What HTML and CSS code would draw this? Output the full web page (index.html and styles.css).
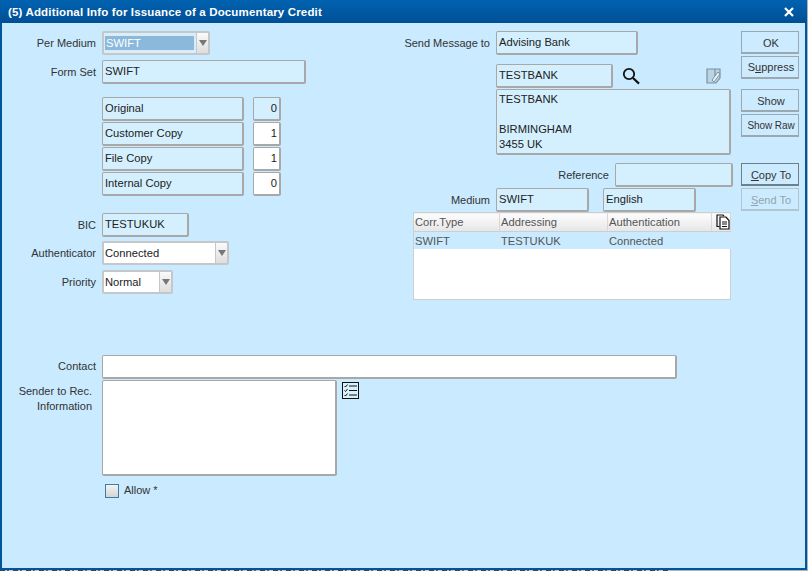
FILE: index.html
```html
<!DOCTYPE html>
<html lang="en">
<head>
    <meta charset="UTF-8">
    <title>Additional Info for Issuance of a Documentary Credit</title>
    <link rel="stylesheet" href="styles.css">
</head>
<body>
    <div class="dialog">
        <header class="titlebar">
            <h1>(5) Additional Info for Issuance of a Documentary Credit</h1>
            <svg class="close" viewBox="0 0 10 10" width="10" height="10"><path d="M1 1L9 9M9 1L1 9" stroke="#fff" stroke-width="2.2" fill="none"/></svg>
        </header>

        <div class="content">
            <div class="top">
                <section class="left-col">
                    <div class="row">
                        <label>Per Medium</label>
                        <div class="select select-medium">
                            <span class="select-value selected">SWIFT</span>
                            <span class="arrow"></span>
                        </div>
                    </div>
                    <div class="row row-formset">
                        <label>Form Set</label>
                        <div class="field w-204">SWIFT</div>
                    </div>

                    <div class="copies">
                        <div class="field">Original</div>
                        <div class="field num">0</div>
                        <div class="field">Customer Copy</div>
                        <div class="field num white">1</div>
                        <div class="field">File Copy</div>
                        <div class="field num white">1</div>
                        <div class="field">Internal Copy</div>
                        <div class="field num white">0</div>
                    </div>

                    <div class="row row-bic">
                        <label>BIC</label>
                        <div class="field w-87">TESTUKUK</div>
                    </div>
                    <div class="row row-auth">
                        <label>Authenticator</label>
                        <div class="select select-auth">
                            <span class="select-value">Connected</span>
                            <span class="arrow"></span>
                        </div>
                    </div>
                    <div class="row row-priority">
                        <label>Priority</label>
                        <div class="select select-priority">
                            <span class="select-value">Normal</span>
                            <span class="arrow"></span>
                        </div>
                    </div>
                </section>

                <section class="mid-col">
                    <div class="row">
                        <label class="mid-label">Send Message to</label>
                        <div class="field w-142">Advising Bank</div>
                    </div>
                    <div class="row row-bank">
                        <div class="field w-117">TESTBANK</div>
                        <svg class="icon-search" viewBox="0 0 18 18" width="18" height="18">
                            <circle cx="7" cy="7" r="5.2" fill="none" stroke="#111" stroke-width="1.8"/>
                            <path d="M11 11L17 16.6" stroke="#111" stroke-width="2.2" fill="none"/>
                        </svg>
                        <svg class="icon-note" viewBox="0 0 15 16" width="15" height="16">
                            <path d="M1 1H14V10L10 15H1Z" fill="#b9d4e4" stroke="#7f909c" stroke-width="1.2"/>
                            <path d="M9 1V8" stroke="#7f909c" stroke-width="1.2"/>
                            <path d="M6 12L12 4L14 6L8 14Z" fill="#e6f3fa" stroke="#7f909c"/>
                        </svg>
                    </div>
                    <div class="field address">TESTBANK<br><br>BIRMINGHAM<br>3455 UK</div>
                    <div class="row row-reference">
                        <label>Reference</label>
                        <div class="field w-118"></div>
                    </div>
                    <div class="row row-medium">
                        <label class="mid-label">Medium</label>
                        <div class="field w-93">SWIFT</div>
                        <div class="field w-93 english">English</div>
                    </div>
                    <table class="grid">
                        <thead>
                            <tr>
                                <th class="c1">Corr.Type</th>
                                <th class="c2">Addressing</th>
                                <th class="c3">Authentication</th>
                                <th class="c4">
                                    <svg viewBox="0 0 14 16" width="14" height="16">
                                        <path d="M3.500 12.500H1V1H7L8 2" fill="none" stroke="#111" stroke-width="1.200"/>
                                        <path d="M4 3H10L13 6.500V15H4Z" fill="#fff" stroke="#111" stroke-width="1.200"/>
                                        <path d="M6 8H11M6 10H11M6 12.500H11" stroke="#111"/>
                                    </svg>
                                </th>
                            </tr>
                        </thead>
                        <tbody>
                            <tr class="sel">
                                <td>SWIFT</td>
                                <td>TESTUKUK</td>
                                <td>Connected</td>
                                <td></td>
                            </tr>
                            <tr class="filler">
                                <td colspan="4"></td>
                            </tr>
                        </tbody>
                    </table>
                </section>

                <section class="buttons">
                    <button class="btn">OK</button>
                    <button class="btn btn-second">S<u>u</u>ppress</button>
                    <button class="btn btn-show">Show</button>
                    <button class="btn btn-second btn-small">Show Raw</button>
                    <button class="btn btn-copy"><u>C</u>opy To</button>
                    <button class="btn btn-disabled"><u>S</u>end To</button>
                </section>
            </div>

            <section class="lower">
                <div class="row row-contact">
                    <label>Contact</label>
                    <div class="field white w-575"></div>
                </div>
                <div class="row row-sender">
                    <label class="label-wrap">Sender to Rec. Information</label>
                    <div class="field white sender"></div>
                    <svg class="icon-list" viewBox="0 0 17 17" width="17" height="17">
                        <rect x="0.500" y="0.500" width="16" height="16" fill="#d9f0fd" stroke="#111"/>
                        <path d="M7 4H15M7 8.500H15M7 13H15" stroke="#111" stroke-width="1.200"/>
                        <path d="M2.500 4L3.500 5L5.500 2.500M2.500 8.500L3.500 9.500L5.500 7M2.500 13L3.500 14L5.500 11.500" stroke="#111" fill="none"/>
                    </svg>
                </div>
                <div class="allow">
                    <span class="checkbox"></span>
                    <span class="allow-text">Allow *</span>
                </div>
            </section>
        </div>
    </div>
    <div class="under-strip"></div>
</body>
</html>
```

FILE: styles.css
```css
* {
    box-sizing: border-box;
}

body {
    margin: 0;
    width: 808px;
    height: 571px;
    overflow: hidden;
    background-color: #a9b4bb;
    font-family: "Liberation Sans", Arial, sans-serif;
    font-size: 11px;
    color: #333;
}

.dialog {
    width: 807px;
    height: 570px;
    display: flex;
    flex-direction: column;
    background-color: #c9eaff;
    border: 2px solid #00569c;
    border-top: 0;
}

.titlebar {
    height: 23px;
    margin: 0 -2px;
    padding: 0 8px;
    display: flex;
    align-items: center;
    justify-content: space-between;
    background: linear-gradient(to bottom, #0062b0, #004f95);
    color: white;
}

.titlebar h1 {
    margin: 0;
    font-size: 11.5px;
    font-weight: bold;
    letter-spacing: 0.16px;
}

.close {
    margin-right: 5px;
}

.content {
    padding-top: 8px;
}

.top {
    display: flex;
    height: 324px;
}

.left-col {
    width: 398px;
}

.mid-col {
    width: 333px;
}

.buttons {
    width: 58px;
    margin-left: 8px;
    display: flex;
    flex-direction: column;
}

.row {
    display: flex;
    align-items: center;
    gap: 6px;
}

.row label {
    width: 94px;
    text-align: right;
    white-space: nowrap;
}

.field {
    height: 24px;
    padding: 0 2px;
    font-size: 11.2px;
    line-height: 21px;
    background-color: #d4f0ff;
    border: 1px solid #a8a8a8;
    border-width: 1px 2px 2px 1px;
    border-radius: 2px;
    color: #222;
    white-space: nowrap;
}

.field.white {
    background-color: white;
}

.num {
    text-align: right;
}

.w-87 { width: 87px; }
.w-93 { width: 93px; }
.w-117 { width: 117px; }
.w-118 { width: 118px; }
.w-142 { width: 142px; }
.w-204 { width: 204px; }
.w-575 { width: 575px; }

.row-formset {
    margin-top: 5px;
}

.copies {
    display: grid;
    grid-template-columns: 142px 28px;
    grid-auto-rows: 24px;
    column-gap: 9px;
    row-gap: 1px;
    margin: 13px 0 0 100px;
}

.row-bic {
    margin-top: 17px;
}

.row-auth {
    margin-top: 4px;
}

.row-priority {
    margin-top: 5px;
}

/* combos */
.select {
    height: 24px;
    display: flex;
    background-color: white;
    border: 2px solid #c4c8ca;
    border-radius: 2px;
}

.select-medium {
    width: 108px;
    background-color: #d4f0ff;
}

.select-auth {
    width: 127px;
}

.select-priority {
    width: 71px;
}

.select-value {
    flex: 1;
    padding-left: 1px;
    font-size: 11.2px;
    line-height: 20px;
    color: #222;
}

.select-value.selected {
    margin: 2px 1px 2px 0;
    padding-left: 1px;
    line-height: 15px;
    background-color: #8ab9db;
    border: 1px solid #dfe9ef;
    color: white;
}

.arrow {
    width: 12px;
    display: flex;
    align-items: center;
    justify-content: center;
    background: linear-gradient(to bottom, #fafafa, #dedede);
    border-left: 1px solid #c4c8ca;
}

.arrow::after {
    content: "";
    border-left: 4px solid transparent;
    border-right: 4px solid transparent;
    border-top: 6px solid #777;
}

/* middle column */
.row .mid-label {
    width: 90px;
}

.row-bank {
    margin: 9px 0 0 96px;
    gap: 0;
}

.icon-search {
    margin-left: 9px;
}

.icon-note {
    margin-left: 66px;
}

.address {
    width: 235px;
    height: 66px;
    margin: 1px 0 0 96px;
    padding-top: 2px;
    line-height: 15px;
}

.row-reference {
    justify-content: flex-end;
    margin-top: 8px;
}

.row-reference label {
    width: auto;
}

.row-medium {
    margin-top: 1px;
}

.english {
    margin-left: 8px;
}

.grid {
    width: 318px;
    height: 88px;
    margin-left: 13px;
    border-collapse: collapse;
    table-layout: fixed;
    font-size: 11.2px;
    background-color: white;
    border: 1px solid #c8d0d4;
    color: #555;
}

.grid th {
    height: 19px;
    padding: 0 1px;
    text-align: left;
    font-weight: normal;
    background: linear-gradient(to bottom, #fdfdfd, #e6e6e6);
    border-right: 1px solid #d8d8d8;
    border-bottom: 1px solid #c8d0d4;
}

.grid .c1 { width: 86px; }
.grid .c2 { width: 108px; }
.grid .c3 { width: 104px; }

.grid th svg {
    display: block;
    margin-left: 3px;
}

.grid .sel {
    height: 17px;
    background-color: #c9eaff;
}

.grid .sel td {
    height: 17px;
    padding: 1px 1px 0;
    border-right: 1px solid #d6e6f0;
    vertical-align: middle;
}

.grid .filler td {
    height: 50px;
    background-color: white;
}

/* buttons */
.btn {
    width: 58px;
    height: 23px;
    padding: 2px 0 0 2px;
    font-family: inherit;
    font-size: 11px;
    color: #333;
    background-color: #cdebff;
    border: 1px solid #9aa8b2;
    border-bottom-width: 2px;
}

.btn-second {
    margin-top: 2px;
    padding-top: 0;
}

.btn-show {
    margin-top: 10px;
}

.btn-small {
    font-size: 10px;
    letter-spacing: -0.1px;
}

.btn-copy {
    margin-top: 26px;
    border-color: #6f7f8a;
}

.btn-disabled {
    margin-top: 2px;
    color: #8fa4b2;
    border-color: #b0c4d2;
}

/* lower part */
.row-contact label {
    margin-bottom: 2px;
}

.row-sender {
    align-items: flex-start;
    margin-top: 1px;
    gap: 0;
}

.row .label-wrap {
    width: 90px;
    margin: 4px 10px 0 0;
    line-height: 15px;
    white-space: normal;
}

.sender {
    width: 235px;
    height: 96px;
}

.icon-list {
    margin: 2px 0 0 5px;
}

.allow {
    display: flex;
    align-items: center;
    gap: 5px;
    margin: 7px 0 0 103px;
    height: 15px;
}

.checkbox {
    width: 14px;
    height: 14px;
    border: 1px solid #3d7ea8;
    background: linear-gradient(to bottom, #f4f4f4, #d4d4d4);
}

.allow-text {
    padding-bottom: 2px;
}

.under-strip {
    height: 1px;
    background: repeating-linear-gradient(to right, #444 0 5px, #b9c2c8 5px 7px, #666 7px 9px, #c2cace 9px 13px) no-repeat;
    background-size: 670px 100%;
}
```
